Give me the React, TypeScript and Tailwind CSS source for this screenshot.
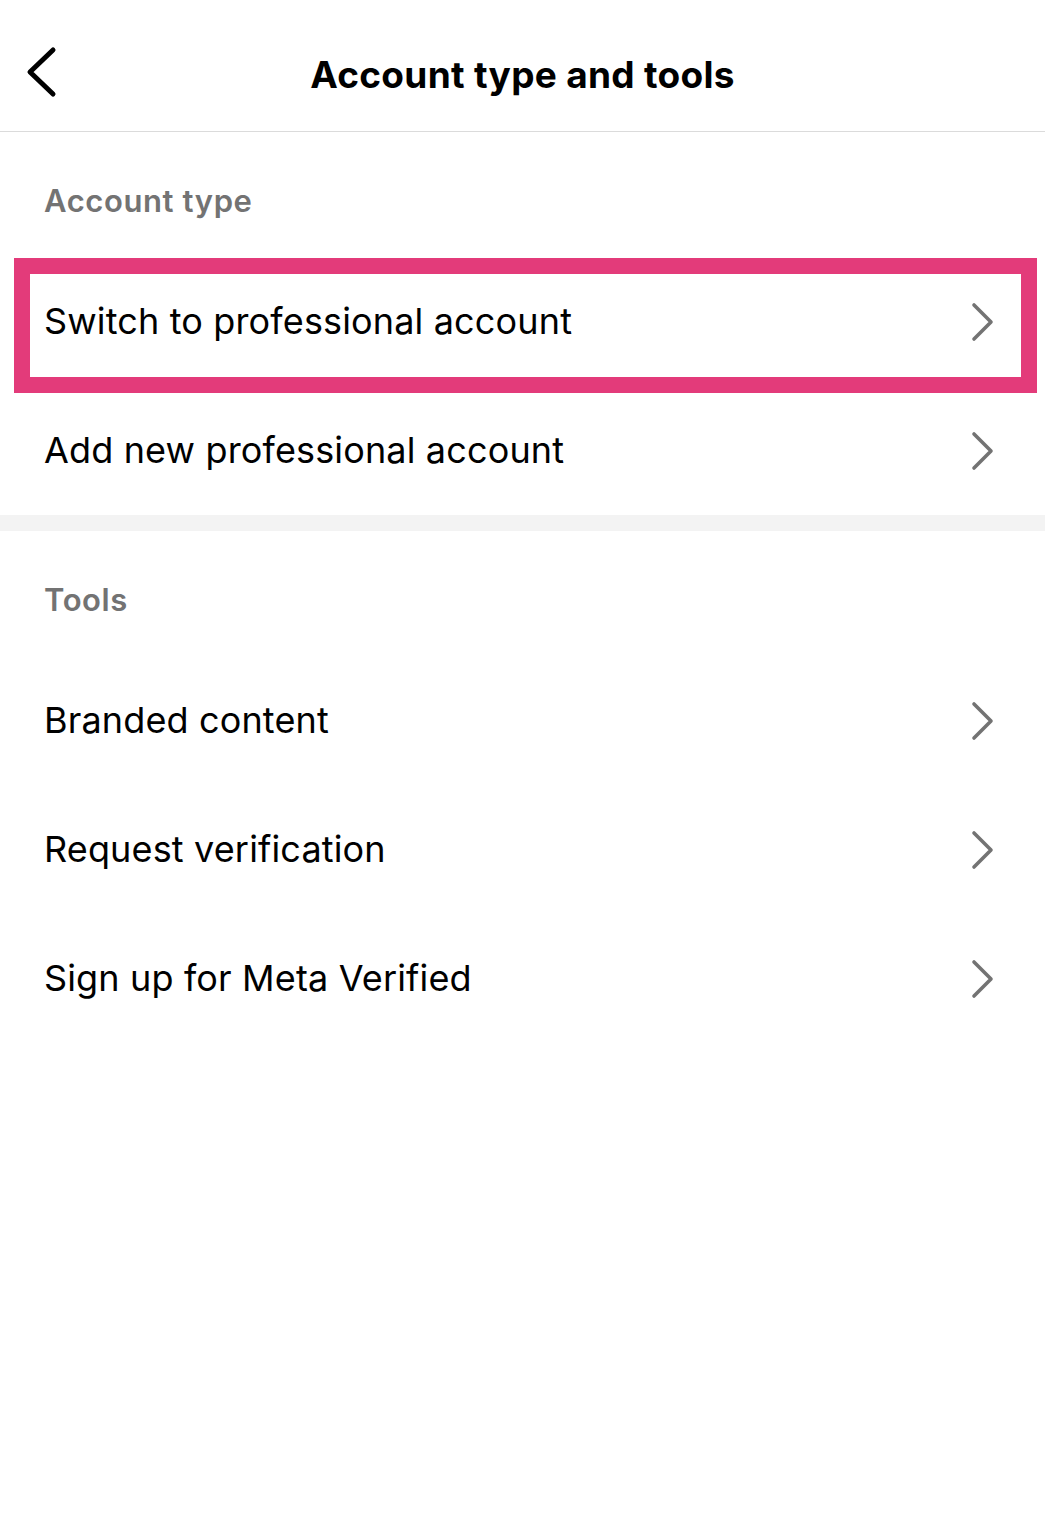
import React from "react";

const Chevron = () => (
  <svg width="24" height="40" viewBox="0 0 24 40" fill="none" className="shrink-0">
    <path d="M4 3 L21 20 L4 37" stroke="#737373" strokeWidth="3.6" strokeLinecap="round" strokeLinejoin="round" />
  </svg>
);

const Row = ({ label, highlight }: { label: string; highlight?: boolean }) => (
  <div className="relative flex h-[129px] items-center justify-between pl-[44px] pr-[51px]">
    <span className="-mt-[2px] text-[36px] leading-none text-black tracking-[0.15px]">{label}</span>
    <Chevron />
    {highlight && (
      <div className="pointer-events-none absolute left-[14px] right-[8px] top-[1px] h-[135px] border-[16px] border-[#e33b7a]" />
    )}
  </div>
);

const SectionHeader = ({ label }: { label: string }) => (
  <div className="flex h-[125px] items-center pl-[44px] pt-[11px]">
    <span className="text-[31px] font-semibold leading-none text-[#737373] tracking-[0.6px]">{label}</span>
  </div>
);

export default function App() {
  return (
    <div className="min-h-[1536px] w-[1045px] bg-white" style={{ fontFamily: "Inter, 'Noto Sans', sans-serif" }}>
      <div className="relative flex h-[132px] items-center justify-center border-b border-[#dbdbdb]">
        <svg width="40" height="60" viewBox="0 0 40 60" fill="none" className="absolute left-[20px] top-[42px]">
          <path d="M33 8 L10 30 L33 52" stroke="#000" strokeWidth="5" strokeLinecap="round" strokeLinejoin="round" />
        </svg>
        <span className="pt-[18px] text-[37px] font-bold leading-none text-black tracking-[0.3px]">Account type and tools</span>
      </div>
      <SectionHeader label="Account type" />
      <Row label="Switch to professional account" highlight />
      <Row label="Add new professional account" />
      <div className="h-[16px] bg-[#f3f3f3]" />
      <SectionHeader label="Tools" />
      <Row label="Branded content" />
      <Row label="Request verification" />
      <Row label="Sign up for Meta Verified" />
    </div>
  );
}
